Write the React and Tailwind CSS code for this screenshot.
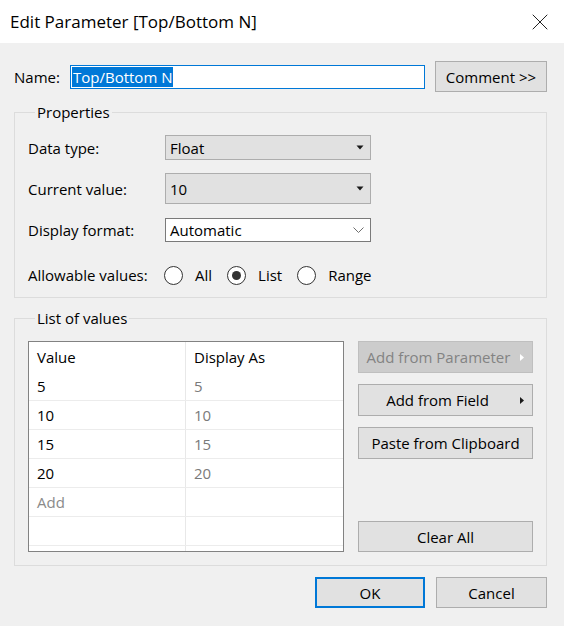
import { X } from "lucide-react";

function Caret() {
  return (
    <svg width="8" height="5" viewBox="0 0 8 5" className="shrink-0">
      <path d="M0.5 0.5 L7.5 0.5 L4 4.5 Z" fill="#1a1a1a" />
    </svg>
  );
}

function Select({ value, height, white }) {
  return (
    <div
      className={`flex w-[206px] items-center justify-between border pl-[4px] pr-[6px] ${height} ${
        white ? "border-[#7a7a7a] bg-white" : "border-[#adadad] bg-[#e1e1e1]"
      }`}
    >
      <span>{value}</span>
      {white ? (
        <svg width="11" height="6" viewBox="0 0 11 6">
          <path d="M0.5 0.5 L5.5 5.5 L10.5 0.5" fill="none" stroke="#6e6e6e" strokeWidth="1" />
        </svg>
      ) : (
        <Caret />
      )}
    </div>
  );
}

function Radio({ checked, label }) {
  return (
    <label className="flex items-center gap-[12px]">
      <span className="flex h-[19px] w-[19px] items-center justify-center rounded-full border border-[#333] bg-white">
        {checked && <span className="h-[9px] w-[9px] rounded-full bg-[#333]" />}
      </span>
      <span>{label}</span>
    </label>
  );
}

function Btn({ children, className = "", disabled }) {
  return (
    <button
      className={`flex items-center justify-center border ${
        disabled ? "border-[#bfbfbf] bg-[#cccccc] text-[#838383]" : "border-[#adadad] bg-[#e1e1e1] text-black"
      } ${className}`}
    >
      {children}
    </button>
  );
}

function SubArrow({ color }) {
  return (
    <span className="absolute right-[8px] top-[12px]">
      <svg width="4" height="7" viewBox="0 0 4 7">
        <path d="M0 0 L4 3.5 L0 7 Z" fill={color} />
      </svg>
    </span>
  );
}

const rows = [
  { v: "5", d: "5" },
  { v: "10", d: "10" },
  { v: "15", d: "15" },
  { v: "20", d: "20" },
  { v: "Add", d: "", placeholder: true },
  { v: "", d: "" },
];

export default function App() {
  return (
    <div className="h-[626px] w-[564px] overflow-hidden bg-[#f0f0f0] font-['Open_Sans',sans-serif] text-[15px] leading-[20px] text-black">
      {/* Title bar */}
      <div className="flex h-[43px] items-center justify-between bg-white pl-[10px] pr-[10px]">
        <span className="text-[17px]">Edit Parameter [Top/Bottom N]</span>
        <X size={28} strokeWidth={0.8} color="#111" />
      </div>

      <div className="pl-[14px] pr-[17px]">
        {/* Name row */}
        <div className="mt-[18px] flex items-center">
          <span className="w-[56px]">Name:</span>
          <div className="flex h-[24px] w-[355px] items-center border border-[#0078d7] bg-white pl-[1px]">
            <span className="bg-[#0078d7] px-[1px] text-white">Top/Bottom N</span>
          </div>
          <Btn className="ml-[10px] h-[31px] w-[112px]">Comment &gt;&gt;</Btn>
        </div>

        {/* Properties */}
        <fieldset className="mt-[10px] border border-[#dcdcdc] pb-[12px] pl-[13px]">
          <legend className="ml-[7px] px-[2px]">Properties</legend>
          <div className="mt-[13px] flex items-center">
            <span className="w-[137px]">Data type:</span>
            <Select value="Float" height="h-[25px]" />
          </div>
          <div className="mt-[13px] flex items-center">
            <span className="w-[137px]">Current value:</span>
            <Select value="10" height="h-[31px]" />
          </div>
          <div className="mt-[14px] flex items-center">
            <span className="w-[137px]">Display format:</span>
            <Select value="Automatic" height="h-[24px]" white />
          </div>
          <div className="mt-[23px] flex h-[20px] items-center">
            <span className="w-[136px]">Allowable values:</span>
            <div className="flex items-center gap-[15px]">
              <Radio label="All" />
              <Radio label="List" checked />
              <Radio label="Range" />
            </div>
          </div>
        </fieldset>

        {/* List of values */}
        <fieldset className="mt-[10px] border border-[#dcdcdc] pb-[13px] pl-[13px]">
          <legend className="ml-[7px] px-[2px]">List of values</legend>
          <div className="mt-[13px] flex">
            <div className="h-[211px] w-[316px] overflow-hidden border border-[#828282] bg-white">
              <div className="flex h-[30px] items-center">
                <div className="flex h-full w-[157px] items-center border-r border-[#e8e8e8] pl-[8px]">Value</div>
                <div className="pl-[8px]">Display As</div>
              </div>
              {rows.map((r, i) => (
                <div key={i} className="flex h-[29px] border-b border-[#ececec]">
                  <div
                    className={`flex w-[157px] items-center border-r border-[#e8e8e8] pl-[8px] ${
                      r.placeholder ? "text-[#8a8a8a]" : ""
                    }`}
                  >
                    {r.v}
                  </div>
                  <div className="flex items-center pl-[8px] text-[#7a7a7a]">{r.d}</div>
                </div>
              ))}
              <div className="flex h-[29px]">
                <div className="w-[157px] border-r border-[#e8e8e8]" />
              </div>
            </div>

            <div className="ml-[14px] flex w-[175px] flex-col">
              <Btn disabled className="relative h-[32px] w-full pr-[14px]">
                Add from Parameter
                <SubArrow color="#ffffff" />
              </Btn>
              <Btn className="relative mt-[11px] h-[32px] w-full pr-[16px]">
                Add from Field
                <SubArrow color="#1a1a1a" />
              </Btn>
              <Btn className="mt-[11px] h-[32px] w-full">Paste from Clipboard</Btn>
              <Btn className="mt-auto h-[31px] w-full">Clear All</Btn>
            </div>
          </div>
        </fieldset>

        {/* Footer */}
        <div className="mt-[11px] flex justify-end gap-[11px]">
          <button className="flex h-[31px] w-[110px] items-center justify-center border-2 border-[#0078d7] bg-[#e1e1e1]">
            OK
          </button>
          <Btn className="h-[31px] w-[111px]">Cancel</Btn>
        </div>
      </div>
    </div>
  );
}
